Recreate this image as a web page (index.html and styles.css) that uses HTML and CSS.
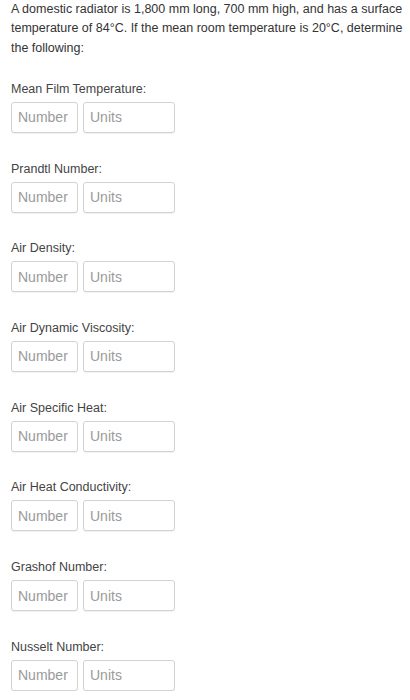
FILE: index.html
```html
<!DOCTYPE html>
<html>
<head>
<meta charset="utf-8">
<link rel="stylesheet" href="styles.css">
</head>
<body>
<div class="page">
  <p class="intro">A domestic radiator is 1,800 mm long, 700 mm high, and has a surface temperature of 84°C. If the mean room temperature is 20°C, determine the following:</p>
  <div class="fields">
    <div class="field"><div class="label">Mean Film Temperature:</div><div class="inputs"><input class="num" placeholder="Number"><input class="units" placeholder="Units"></div></div>
    <div class="field"><div class="label">Prandtl Number:</div><div class="inputs"><input class="num" placeholder="Number"><input class="units" placeholder="Units"></div></div>
    <div class="field"><div class="label">Air Density:</div><div class="inputs"><input class="num" placeholder="Number"><input class="units" placeholder="Units"></div></div>
    <div class="field"><div class="label">Air Dynamic Viscosity:</div><div class="inputs"><input class="num" placeholder="Number"><input class="units" placeholder="Units"></div></div>
    <div class="field"><div class="label">Air Specific Heat:</div><div class="inputs"><input class="num" placeholder="Number"><input class="units" placeholder="Units"></div></div>
    <div class="field"><div class="label">Air Heat Conductivity:</div><div class="inputs"><input class="num" placeholder="Number"><input class="units" placeholder="Units"></div></div>
    <div class="field"><div class="label">Grashof Number:</div><div class="inputs"><input class="num" placeholder="Number"><input class="units" placeholder="Units"></div></div>
    <div class="field"><div class="label">Nusselt Number:</div><div class="inputs"><input class="num" placeholder="Number"><input class="units" placeholder="Units"></div></div>
  </div>
</div>
</body>
</html>
```
FILE: styles.css
```css
html, body {
  margin: 0;
  padding: 0;
  background: #fff;
}
.page {
  padding: 0 6px 0 11px;
  font-family: "Liberation Sans", Arial, sans-serif;
  color: #333;
}
.intro {
  margin: 0;
  font-size: 12.5px;
  line-height: 19.3px;
}
.fields {
  margin-top: 22px;
  display: flex;
  flex-direction: column;
  gap: 26.7px;
}
.label {
  font-size: 12.5px;
  line-height: 19px;
  color: #444;
}
.inputs {
  margin-top: 3px;
  display: flex;
  gap: 5px;
}
.inputs input {
  box-sizing: border-box;
  height: 31px;
  margin: 0;
  padding: 0 6px;
  border: 1px solid #d2d2d2;
  border-radius: 3px;
  box-shadow: 0 1px 1px rgba(0,0,0,0.06);
  font-family: "Liberation Sans", Arial, sans-serif;
  font-size: 14px;
  color: #333;
  background: #fff;
  outline: none;
}
.inputs input::placeholder {
  color: #9a9a9a;
}
.num {
  width: 67px;
}
.units {
  width: 92px;
}
```
